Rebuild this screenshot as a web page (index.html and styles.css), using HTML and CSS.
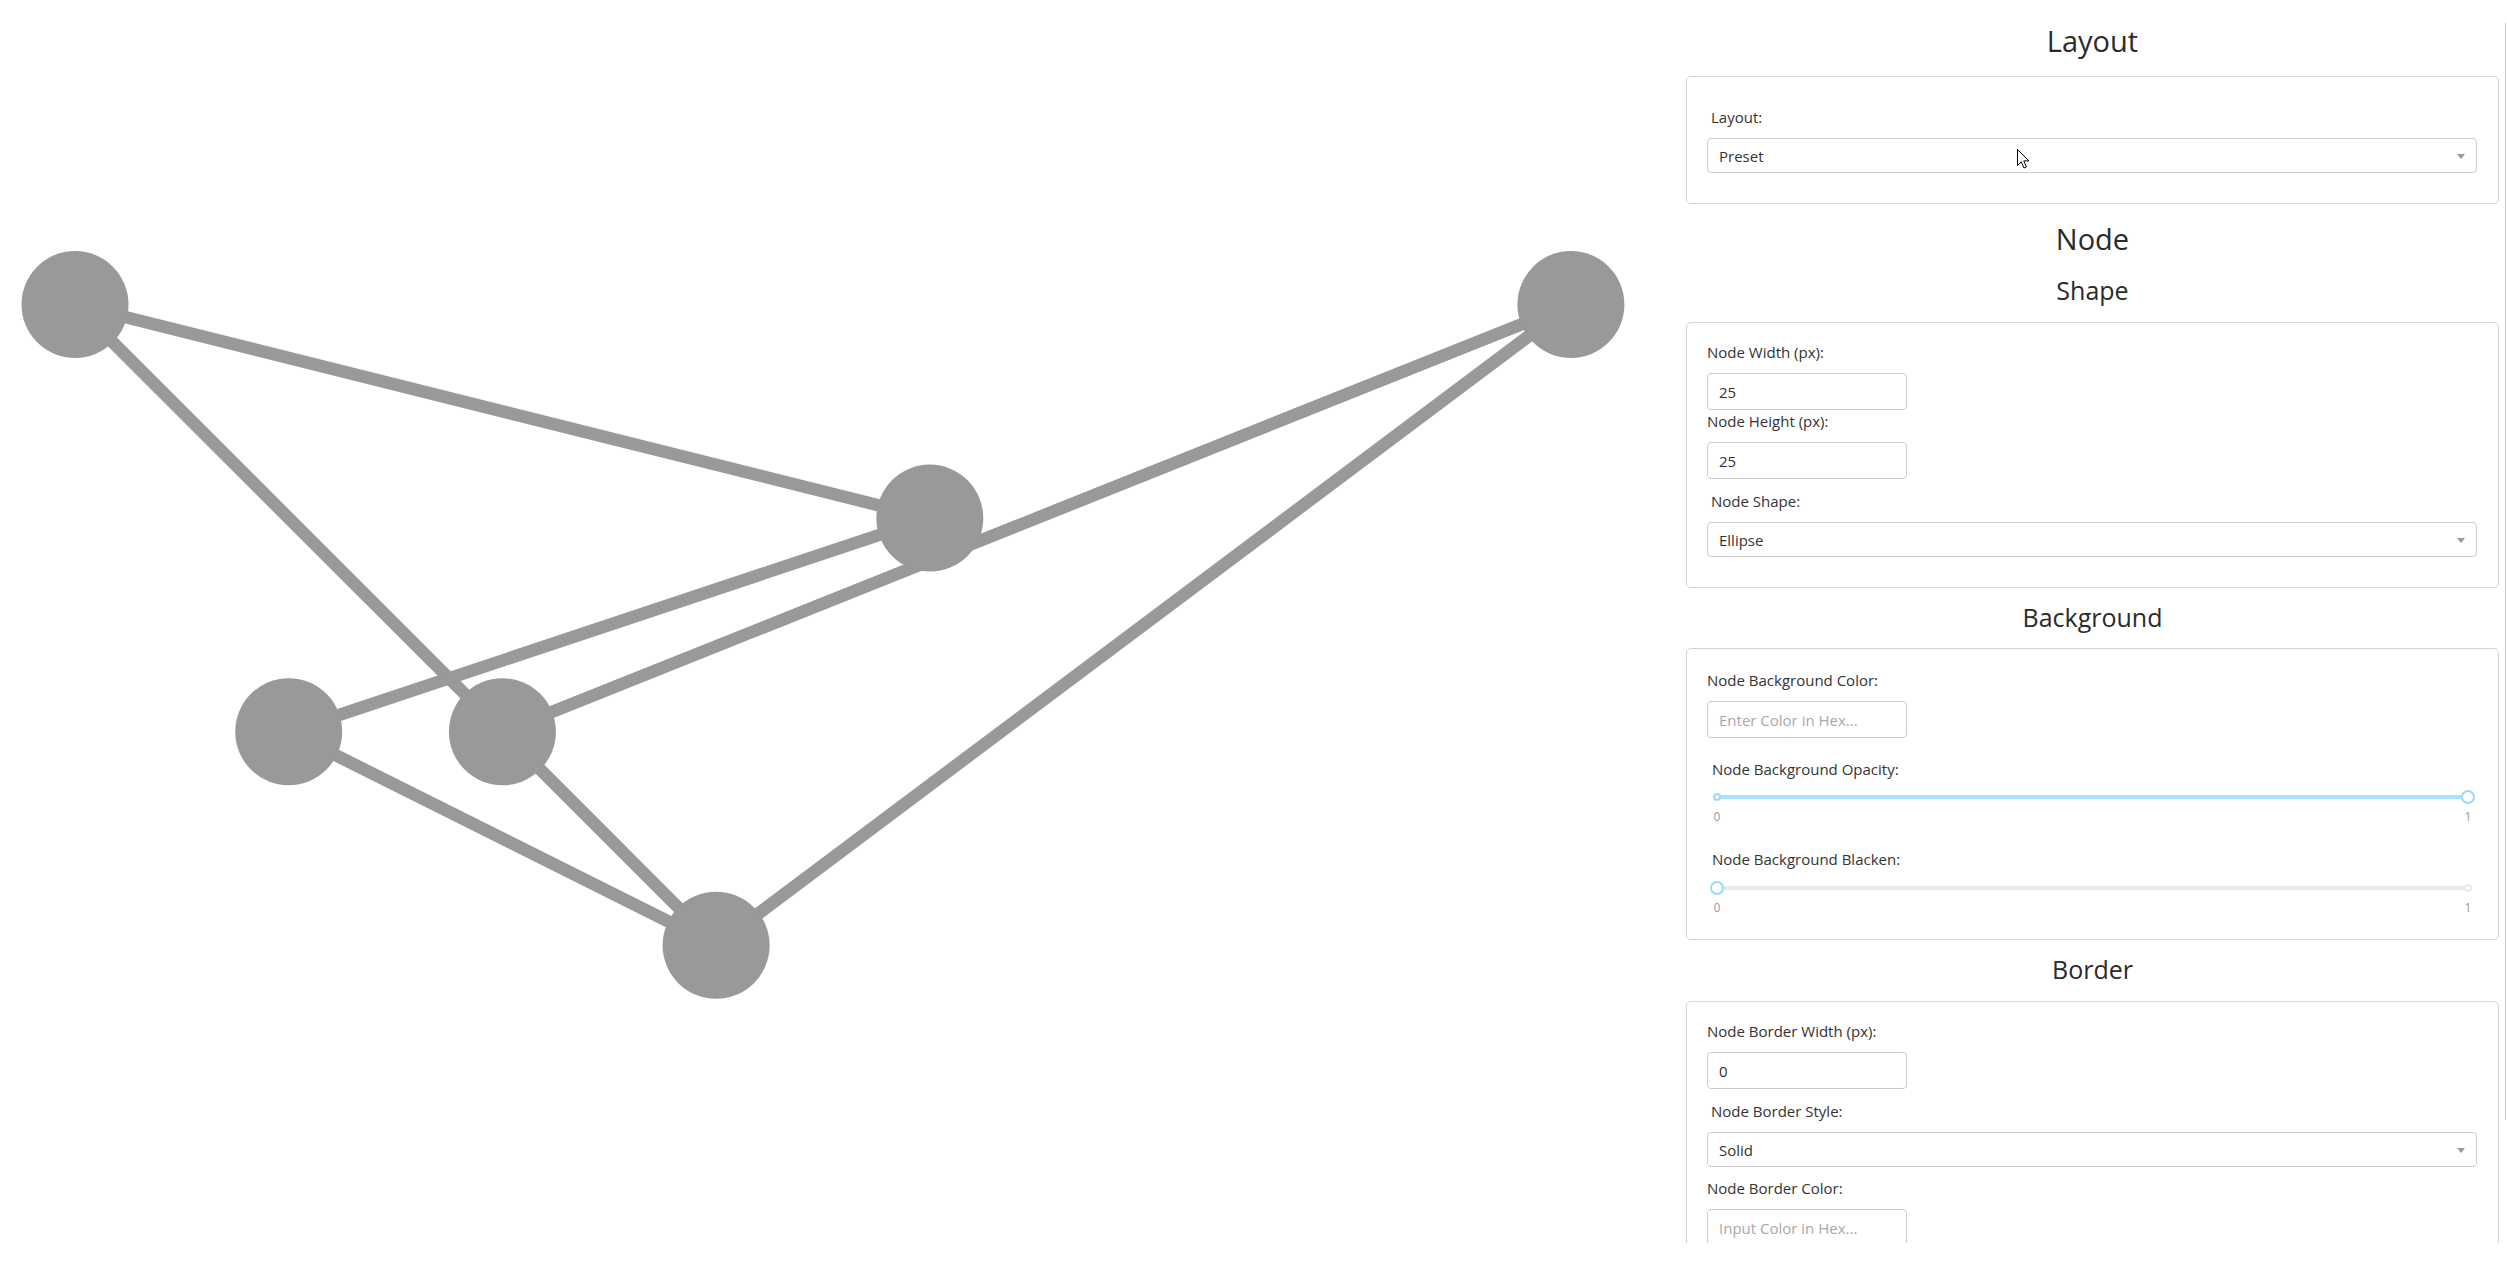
FILE: index.html
```html
<!DOCTYPE html>
<html lang="en">
<head>
<meta charset="utf-8">
<title>Cytoscape Style Demo</title>
<link rel="stylesheet" href="styles.css">
</head>
<body>
<div class="app">
  <div class="graph">
    <svg width="1671" height="1278" viewBox="0 0 1671 1278" xmlns="http://www.w3.org/2000/svg">
      <g stroke="#999" stroke-width="12.5" fill="none">
        <line x1="75" y1="304.5" x2="929.8" y2="518.1"/>
        <line x1="75" y1="304.5" x2="502.4" y2="731.7"/>
        <line x1="502.4" y1="731.7" x2="716.1" y2="945.3"/>
        <line x1="288.7" y1="731.7" x2="929.8" y2="518.1"/>
        <line x1="502.4" y1="731.7" x2="1570.9" y2="304.5"/>
        <line x1="288.7" y1="731.7" x2="716.1" y2="945.3"/>
        <line x1="1570.9" y1="304.5" x2="716.1" y2="945.3"/>
      </g>
      <g fill="#999">
        <circle cx="75" cy="304.5" r="53.5"/>
        <circle cx="1570.9" cy="304.5" r="53.5"/>
        <circle cx="929.8" cy="518.1" r="53.5"/>
        <circle cx="288.7" cy="731.7" r="53.5"/>
        <circle cx="502.4" cy="731.7" r="53.5"/>
        <circle cx="716.1" cy="945.3" r="53.5"/>
      </g>
    </svg>
  </div>

  <div class="panel">
    <div class="scroll-line"></div>

    <h2 class="title">Layout</h2>
    <div class="card card-layout">
      <label class="field-label indent">Layout:</label>
      <div class="select">
        <span>Preset</span>
        <span class="arrow"></span>
        <svg class="cursor" width="13" height="20" viewBox="0 0 13 20" xmlns="http://www.w3.org/2000/svg">
          <path d="M0.5 0.5 L0.5 16.5 L4.3 12.8 L7 19 L9.4 18 L6.8 11.9 L12 11.9 Z" fill="#fff" stroke="#000" stroke-width="1" stroke-linejoin="miter"/>
        </svg>
      </div>
    </div>

    <h2 class="title title-node">Node</h2>
    <h3 class="subtitle sub-shape">Shape</h3>
    <div class="card">
      <label class="field-label">Node Width (px):</label>
      <input class="text-input" type="text" value="25">
      <label class="field-label gap-3">Node Height (px):</label>
      <input class="text-input" type="text" value="25">
      <div class="gap-14">
        <label class="field-label indent">Node Shape:</label>
        <div class="select"><span>Ellipse</span><span class="arrow"></span></div>
      </div>
    </div>

    <h3 class="subtitle sub-bg">Background</h3>
    <div class="card card-bg">
      <label class="field-label">Node Background Color:</label>
      <input class="text-input" type="text" placeholder="Enter Color in Hex...">

      <div class="slider-group gap-23">
        <label class="field-label">Node Background Opacity:</label>
        <div class="slider">
          <div class="rail"></div>
          <div class="track"></div>
          <span class="dot active at-start"></span>
          <span class="dot active at-end"></span>
          <span class="handle at-end"></span>
        </div>
        <div class="marks"><span class="mark at-start">0</span><span class="mark at-end">1</span></div>
      </div>

      <div class="slider-group gap-26">
        <label class="field-label label-slider2">Node Background Blacken:</label>
        <div class="slider">
          <div class="rail"></div>
          <span class="dot active at-start"></span>
          <span class="dot at-end"></span>
          <span class="handle at-start"></span>
        </div>
        <div class="marks"><span class="mark at-start">0</span><span class="mark at-end">1</span></div>
      </div>
    </div>

    <h3 class="subtitle sub-border">Border</h3>
    <div class="card">
      <label class="field-label">Node Border Width (px):</label>
      <input class="text-input" type="text" value="0">
      <div class="gap-14">
        <label class="field-label indent">Node Border Style:</label>
        <div class="select"><span>Solid</span><span class="arrow"></span></div>
      </div>
      <label class="field-label gap-13">Node Border Color:</label>
      <input class="text-input" type="text" placeholder="Input Color in Hex...">
      <div class="spacer"></div>
    </div>
  </div>
</div>
</body>
</html>
```

FILE: styles.css
```css
* {
  box-sizing: border-box;
}

html, body {
  margin: 0;
  padding: 0;
  background: #ffffff;
}

body {
  font-family: "Open Sans", "Noto Sans", sans-serif;
  color: #333333;
}

.app {
  display: flex;
  width: 2507px;
  height: 1278px;
  overflow: hidden;
}

.graph {
  flex: none;
  width: 1671px;
  height: 1278px;
}

.graph svg {
  display: block;
}

.panel {
  flex: 1;
  position: relative;
  height: 1243px;
  overflow: hidden;
  padding: 23px 8px 0 15px;
}

.scroll-line {
  position: absolute;
  right: 1px;
  top: 23px;
  width: 1px;
  height: 1097px;
  background: #c8c8c8;
}

.title {
  margin: 0;
  font-size: 29px;
  line-height: 36px;
  font-weight: 400;
  text-align: center;
  color: #2b2b2b;
}

.subtitle {
  margin: 0;
  font-size: 25px;
  line-height: 30px;
  font-weight: 400;
  text-align: center;
  color: #2b2b2b;
}

.title-node { margin-top: 17px; }
.sub-shape { margin-top: 18px; }
.sub-bg { margin-top: 14px; }
.sub-border { margin-top: 14px; }

.card {
  margin-top: 17px;
  border: 1px solid #d4d4d4;
  border-radius: 5px;
  padding: 21px 21px 30px 20px;
}

.card-layout {
  padding-top: 32px;
}

.card-bg {
  margin-top: 16px;
  padding-top: 23px;
  padding-bottom: 23px;
}

.field-label {
  display: block;
  font-size: 15px;
  line-height: 17px;
  margin-bottom: 12px;
  color: #333333;
}

.indent {
  padding-left: 4px;
}

.gap-3 { margin-top: 3px; }
.gap-13 { margin-top: 13px; }
.gap-14 { margin-top: 14px; }
.gap-23 { margin-top: 23px; }
.gap-26 { margin-top: 26px; }

.label-slider2 {
  margin-bottom: 13px;
}

.text-input {
  display: block;
  width: 200px;
  height: 37px;
  margin: 0;
  border: 1px solid #cccccc;
  border-radius: 4px;
  padding: 0 11px;
  font-family: "Open Sans", "Noto Sans", sans-serif;
  font-size: 15px;
  color: #333333;
  background: #ffffff;
  outline: none;
}

.text-input::placeholder {
  color: #a8a8a8;
}

.select {
  position: relative;
  display: flex;
  align-items: center;
  height: 35px;
  border: 1px solid #cccccc;
  border-radius: 4px;
  padding: 0 11px;
  font-size: 15px;
  color: #333333;
  background: #ffffff;
}

.select .arrow {
  position: absolute;
  right: 11px;
  top: 15px;
  width: 0;
  height: 0;
  border-style: solid;
  border-width: 5px 4px 0 4px;
  border-color: #999999 transparent transparent transparent;
}

.select .cursor {
  position: absolute;
  left: 309px;
  top: 10px;
}

.slider-group {
  padding-left: 5px;
}

.slider {
  position: relative;
  height: 14px;
  margin: 0 9px 0 5px;
}

.rail,
.track {
  position: absolute;
  left: 0;
  right: 0;
  top: 5px;
  height: 4px;
  border-radius: 2px;
}

.rail {
  background: #e9e9e9;
}

.track {
  background: #abe2fb;
}

.dot {
  position: absolute;
  top: 3px;
  width: 8px;
  height: 8px;
  margin-left: -4px;
  border: 2px solid #e9e9e9;
  border-radius: 50%;
  background: #ffffff;
}

.dot.active {
  border-color: #96dbfa;
}

.handle {
  position: absolute;
  top: 0;
  width: 14px;
  height: 14px;
  margin-left: -7px;
  border: 2px solid #96dbfa;
  border-radius: 50%;
  background: #ffffff;
}

.at-start { left: 0; }
.at-end { left: 100%; }

.marks {
  position: relative;
  height: 16px;
  margin: 5px 9px 0 5px;
  font-size: 12px;
  line-height: 16px;
  color: #999999;
}

.mark {
  position: absolute;
  top: 0;
  transform: translateX(-50%);
}

.spacer {
  height: 40px;
}
```
